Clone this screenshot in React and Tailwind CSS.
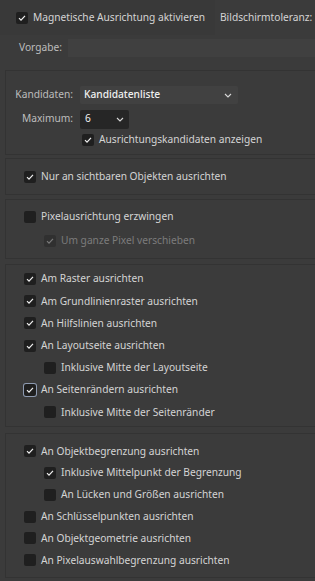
import React from 'react';

const font = { fontFamily: '"Noto Sans", "Open Sans", sans-serif' };

const Check = ({ checked, disabled, focus }) => (
  <span
    className={
      'w-[12px] h-[12px] rounded-[2px] flex items-center justify-center shrink-0 ' +
      (disabled ? 'bg-[#303030]' : 'bg-[#1f1f1f]') +
      (focus ? ' ring-1 ring-[#8d9ab0]' : '')
    }
  >
    {checked && (
      <svg width="8" height="8" viewBox="0 0 8 8">
        <path
          d="M1 4.2 L3 6.2 L7 1.8"
          fill="none"
          stroke={disabled ? '#7a7a7a' : '#f0f0f0'}
          strokeWidth="1.2"
        />
      </svg>
    )}
  </span>
);

const Row = ({ label, checked, indent, disabled, focus, className = 'h-[22px]' }) => (
  <div className={'flex items-center gap-[5px] ' + className + ' ' + (indent ? 'pl-[38px]' : 'pl-[18px]')}>
    <Check checked={checked} disabled={disabled} focus={focus} />
    <span className={'text-[10.2px] whitespace-nowrap ' + (disabled ? 'text-[#7c7c7c]' : 'text-[#d4d4d4]')}>{label}</span>
  </div>
);

const Section = ({ children, className }) => (
  <div className={'ml-[5px] w-[330px] border border-[#333333] bg-[#3b3b3b] ' + className}>{children}</div>
);

const Chevron = () => (
  <svg width="8" height="5" viewBox="0 0 8 5">
    <path d="M1 1 L4 4 L7 1" fill="none" stroke="#d8d8d8" strokeWidth="1.1" />
  </svg>
);

export default function App() {
  return (
    <div className="w-[315px] h-[581px] bg-[#3b3b3b] overflow-hidden select-none" style={font}>
      {/* top */}
      <div className="flex items-start h-[37px]">
        <div className="flex items-center gap-[5px] pl-[16px] pr-[6px] w-[215px] h-[35px] bg-[#393939]">
          <Check checked />
          <span className="text-[10.2px] text-[#d4d4d4] whitespace-nowrap">Magnetische Ausrichtung aktivieren</span>
        </div>
        <span className="text-[10.2px] text-[#d4d4d4] whitespace-nowrap pl-[5px] mt-[10px]">Bildschirmtoleranz:</span>
      </div>
      <div className="flex items-center h-[22px]">
        <span className="text-[10.2px] text-[#bdbdbd] pl-[19px] w-[68px]">Vorgabe:</span>
        <div className="flex-1 h-[18px] bg-[#404040]"></div>
      </div>

      <div className="h-[11px]"></div>

      <Section className="pt-[14px] pb-[6px]">
        <div className="flex items-center h-[20px]">
          <span className="text-[10.2px] text-[#bdbdbd] w-[74px] text-right pr-[7px]">Kandidaten:</span>
          <div className="flex items-center justify-between w-[158px] h-[18px] bg-[#414141] pl-[4px] pr-[6px] rounded-[2px]">
            <span className="text-[10.2px] text-[#f0f0f0] font-medium">Kandidatenliste</span>
            <Chevron />
          </div>
        </div>
        <div className="flex items-center h-[26px] mt-[1px]">
          <span className="text-[10.2px] text-[#bdbdbd] w-[74px] text-right pr-[7px]">Maximum:</span>
          <div className="flex items-center justify-between w-[49px] h-[19px] bg-[#262626] pl-[5px] pr-[5px] rounded-[2px]">
            <span className="text-[10.2px] text-[#f0f0f0]">6</span>
            <Chevron />
          </div>
        </div>
        <div className="flex items-center gap-[5px] h-[16px] pl-[76px]">
          <Check checked />
          <span className="text-[10.2px] text-[#d4d4d4]">Ausrichtungskandidaten anzeigen</span>
        </div>
      </Section>

      <div className="h-[3px]"></div>

      <Section className="pt-[7px] pb-[6px]">
        <Row label="Nur an sichtbaren Objekten ausrichten" checked />
      </Section>

      <div className="h-[4px]"></div>

      <Section className="pt-[6px] pb-[6px]">
        <Row label="Pixelausrichtung erzwingen" />
        <Row label="Um ganze Pixel verschieben" checked indent disabled className="h-[22px] mt-[2px]" />
      </Section>

      <div className="h-[5px]"></div>

      <Section className="pt-[3px] pb-[3px]">
        <Row label="Am Raster ausrichten" checked className="h-[22.2px]" />
        <Row label="Am Grundlinienraster ausrichten" checked className="h-[22.2px]" />
        <Row label="An Hilfslinien ausrichten" checked className="h-[22.2px]" />
        <Row label="An Layoutseite ausrichten" checked className="h-[22.2px]" />
        <Row label="Inklusive Mitte der Layoutseite" indent className="h-[22.2px]" />
        <Row label="An Seitenrändern ausrichten" checked focus className="h-[22.2px]" />
        <Row label="Inklusive Mitte der Seitenränder" indent className="h-[22.2px]" />
      </Section>

      <div className="h-[6px]"></div>

      <Section className="pt-[6px] pb-[6px]">
        <Row label="An Objektbegrenzung ausrichten" checked className="h-[21.8px]" />
        <Row label="Inklusive Mittelpunkt der Begrenzung" checked indent className="h-[21.8px]" />
        <Row label="An Lücken und Größen ausrichten" indent className="h-[21.8px]" />
        <Row label="An Schlüsselpunkten ausrichten" className="h-[21.8px]" />
        <Row label="An Objektgeometrie ausrichten" className="h-[21.8px]" />
        <Row label="An Pixelauswahlbegrenzung ausrichten" className="h-[21.8px]" />
      </Section>
    </div>
  );
}
